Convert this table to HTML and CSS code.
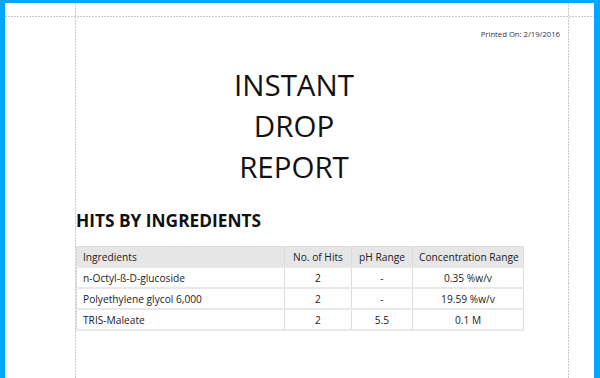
FILE: index.html
```html
<!DOCTYPE html>
<html>
<head>
<meta charset="utf-8">
<link rel="stylesheet" href="styles.css">
</head>
<body>
<div class="frame">
  <div class="hguide"></div>
  <div class="gutter-left"></div>
  <div class="sheet">
    <div class="printed">Printed On: 2/19/2016</div>
    <h1 class="title">INSTANT<br>DROP<br>REPORT</h1>
    <h2 class="section">HITS BY INGREDIENTS</h2>
    <table class="hits">
      <thead>
        <tr>
          <th class="c-name">Ingredients</th>
          <th class="c-hits">No. of Hits</th>
          <th class="c-ph">pH Range</th>
          <th class="c-conc">Concentration Range</th>
        </tr>
      </thead>
      <tbody>
        <tr><td class="c-name">n-Octyl-ß-D-glucoside</td><td>2</td><td>-</td><td>0.35 %w/v</td></tr>
        <tr><td class="c-name">Polyethylene glycol 6,000</td><td>2</td><td>-</td><td>19.59 %w/v</td></tr>
        <tr><td class="c-name">TRIS-Maleate</td><td>2</td><td>5.5</td><td>0.1 M</td></tr>
      </tbody>
    </table>
  </div>
  <div class="gutter-right"></div>
</div>
</body>
</html>
```

FILE: styles.css
```css
html, body {
  margin: 0;
  padding: 0;
  background: #ffffff;
}

body {
  font-family: "Open Sans", "Noto Sans", sans-serif;
  color: #1a1a1a;
}

.frame {
  position: relative;
  display: flex;
  height: 378px;
  box-sizing: border-box;
  border-top: 3px solid #00a6ff;
  border-left: 5px solid #00a6ff;
  border-right: 6px solid #00a6ff;
  background: #ffffff;
  overflow: hidden;
}

.hguide {
  position: absolute;
  left: 0;
  right: 0;
  top: 13px;
  height: 1px;
  background: repeating-linear-gradient(to right, #c8c8c8 0 2px, transparent 2px 3px);
}

.gutter-left {
  width: 70px;
  flex: none;
}

.gutter-right {
  flex: 1;
}

.sheet {
  width: 492px;
  flex: none;
  border-left: 1px solid transparent;
  border-right: 1px solid transparent;
  border-image: repeating-linear-gradient(to bottom, #c8c8c8 0 2px, transparent 2px 3px) 1;
  display: flex;
  flex-direction: column;
}

.printed {
  align-self: flex-end;
  margin-top: 25px;
  margin-right: 8px;
  font-size: 7.7px;
  line-height: 12px;
  color: #333333;
}

.title {
  margin: 24px 56px 0 0;
  font-weight: 400;
  font-size: 29.5px;
  line-height: 41px;
  text-align: center;
  color: #111111;
}

.section {
  margin: 23px 0 0 0;
  font-size: 17.3px;
  font-weight: 700;
  line-height: 22px;
  color: #111111;
}

.hits {
  margin-top: 14px;
  width: 448px;
  border-collapse: collapse;
  font-size: 10.2px;
  color: #222222;
  table-layout: fixed;
}

.hits th,
.hits td {
  height: 19px;
  padding: 0 6px;
  border-left: 1px solid #dcdcdc;
  border-right: 1px solid #dcdcdc;
  border-bottom: 2px solid #e8e8e8;
  text-align: center;
  font-weight: 400;
  white-space: nowrap;
}

.hits th {
  background: #e6e6e6;
  border-top: 1px solid #dcdcdc;
}

.hits .c-name {
  text-align: left;
  width: 195px;
}

.hits .c-hits { width: 54px; }
.hits .c-ph { width: 48px; }
.hits .c-conc { width: 98px; }
```
